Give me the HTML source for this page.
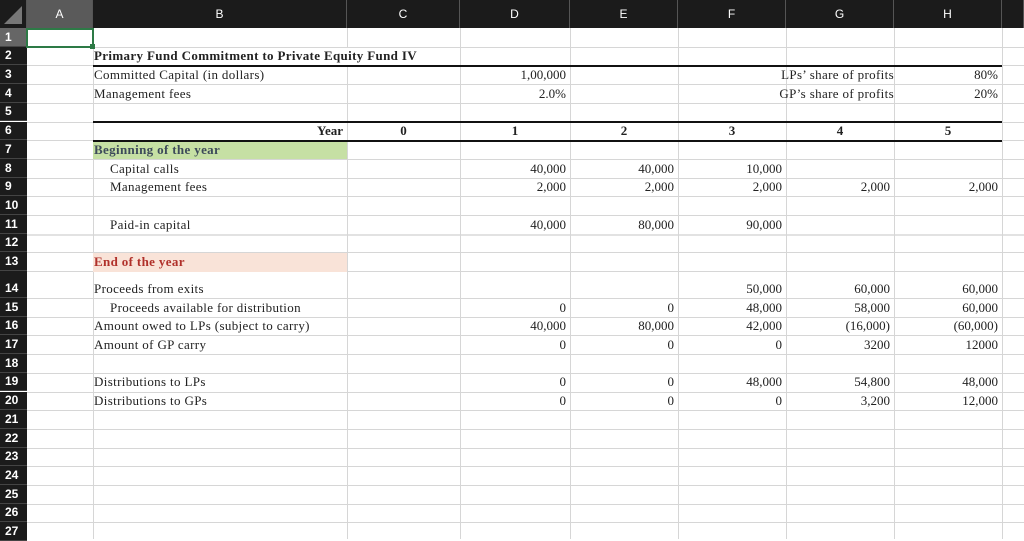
<!DOCTYPE html>
<html><head><meta charset="utf-8"><style>
body{margin:0;width:1024px;height:539px;overflow:hidden;background:#fff;position:relative;font-family:"Liberation Serif",serif;font-size:13px;color:#222}
div{position:absolute;box-sizing:border-box}
.hl{left:27px;width:997px;height:1px;background:#d6d6d6}
.vl{top:28px;height:511px;width:1px;background:#d6d6d6}
.k{left:93px;width:909px;height:1.5px;background:#111}
.c{height:18.7px;white-space:nowrap;padding:0 4px 2px 4px;display:flex;align-items:flex-end;line-height:14px}
.l{padding-left:1px;letter-spacing:0.35px}
.r{justify-content:flex-end}
.m{justify-content:center}
.b{font-weight:bold}
.hd{top:0;height:28px;background:#1b1b1b;color:#fff;font-family:"Liberation Sans",sans-serif;font-size:12px;display:flex;align-items:center;justify-content:center;border-right:1px solid #555}
.rn{left:0;width:27px;height:18.7px;background:#1b1b1b;color:#fff;font-family:"Liberation Sans",sans-serif;font-size:12px;font-weight:bold;padding:0 0 2px 5px;display:flex;align-items:flex-end;border-bottom:1px solid #444}
</style></head><body>
<div class="hd" style="left:0;width:27px"><svg width="27" height="28" style="position:absolute;left:0;top:0"><polygon points="22,6 22,24 4,24" fill="#777"/></svg></div>
<div class="hd" style="left:27px;width:66px;background:#5a5a5a">A</div>
<div class="hd" style="left:93px;width:254px">B</div>
<div class="hd" style="left:347px;width:113px">C</div>
<div class="hd" style="left:460px;width:110px">D</div>
<div class="hd" style="left:570px;width:108px">E</div>
<div class="hd" style="left:678px;width:108px">F</div>
<div class="hd" style="left:786px;width:108px">G</div>
<div class="hd" style="left:894px;width:108px">H</div>
<div class="hd" style="left:1002px;width:22px"></div>
<div class="rn" style="top:28px;background:#666">1</div>
<div class="rn" style="top:46.7px">2</div>
<div class="rn" style="top:65.4px">3</div>
<div class="rn" style="top:84.1px">4</div>
<div class="rn" style="top:102.8px">5</div>
<div class="rn" style="top:121.5px">6</div>
<div class="rn" style="top:140.2px">7</div>
<div class="rn" style="top:158.9px">8</div>
<div class="rn" style="top:177.6px">9</div>
<div class="rn" style="top:196.3px">10</div>
<div class="rn" style="top:215px">11</div>
<div class="rn" style="top:233.7px">12</div>
<div class="rn" style="top:252.4px">13</div>
<div class="rn" style="top:271.1px;height:26.9px">14</div>
<div class="rn" style="top:298px">15</div>
<div class="rn" style="top:316.7px">16</div>
<div class="rn" style="top:335.4px">17</div>
<div class="rn" style="top:354.1px">18</div>
<div class="rn" style="top:372.8px">19</div>
<div class="rn" style="top:391.5px">20</div>
<div class="rn" style="top:410.2px">21</div>
<div class="rn" style="top:428.9px">22</div>
<div class="rn" style="top:447.6px">23</div>
<div class="rn" style="top:466.3px">24</div>
<div class="rn" style="top:485px">25</div>
<div class="rn" style="top:503.7px">26</div>
<div class="rn" style="top:522.4px">27</div>
<div class="hl" style="top:46.7px"></div><div class="hl" style="top:65.4px"></div><div class="hl" style="top:84.1px"></div><div class="hl" style="top:102.8px"></div><div class="hl" style="top:121.5px"></div><div class="hl" style="top:140.2px"></div><div class="hl" style="top:158.9px"></div><div class="hl" style="top:177.6px"></div><div class="hl" style="top:196.3px"></div><div class="hl" style="top:215px"></div><div class="hl" style="top:233.7px;height:2px;background:#e2e2e2"></div><div class="hl" style="top:252.4px"></div><div class="hl" style="top:271.1px"></div><div class="hl" style="top:298px"></div><div class="hl" style="top:316.7px"></div><div class="hl" style="top:335.4px"></div><div class="hl" style="top:354.1px"></div><div class="hl" style="top:372.8px"></div><div class="hl" style="top:391.5px"></div><div class="hl" style="top:410.2px"></div><div class="hl" style="top:428.9px"></div><div class="hl" style="top:447.6px"></div><div class="hl" style="top:466.3px"></div><div class="hl" style="top:485px"></div><div class="hl" style="top:503.7px"></div><div class="hl" style="top:522.4px"></div>
<div class="vl" style="left:93px"></div><div class="vl" style="left:347px"></div><div class="vl" style="left:460px"></div><div class="vl" style="left:570px"></div><div class="vl" style="left:678px"></div><div class="vl" style="left:786px"></div><div class="vl" style="left:894px"></div><div class="vl" style="left:1002px"></div>
<div style="left:94px;top:47.7px;width:335px;height:17px;background:#fff"></div>
<div style="left:93px;top:141px;width:254px;height:18px;background:#c6e0a4"></div>
<div style="left:93px;top:253px;width:254px;height:18.5px;background:#f9e3d8"></div>
<div class="k" style="top:65px"></div><div class="k" style="top:121px"></div><div class="k" style="top:140px"></div>
<div style="left:26px;top:27.5px;width:68px;height:20px;border:2px solid #2d7a46"></div>
<div style="left:90px;top:44px;width:5px;height:5px;background:#2d7a46"></div>
<div class="c b l" style="left:93px;top:46.7px">Primary Fund Commitment to Private Equity Fund IV</div>
<div class="c l" style="left:93px;top:65.4px">Committed Capital (in dollars)</div>
<div class="c r" style="left:460px;width:110px;top:65.4px">1,00,000</div>
<div class="c r l" style="left:686px;width:212px;top:65.4px">LPs’ share of profits</div>
<div class="c r" style="left:894px;width:108px;top:65.4px">80%</div>
<div class="c l" style="left:93px;top:84.1px">Management fees</div>
<div class="c r" style="left:460px;width:110px;top:84.1px">2.0%</div>
<div class="c r l" style="left:686px;width:212px;top:84.1px">GP’s share of profits</div>
<div class="c r" style="left:894px;width:108px;top:84.1px">20%</div>
<div class="c r b" style="left:93px;width:254px;top:121.5px">Year</div>
<div class="c m b" style="left:347px;width:113px;top:121.5px">0</div>
<div class="c m b" style="left:460px;width:110px;top:121.5px">1</div>
<div class="c m b" style="left:570px;width:108px;top:121.5px">2</div>
<div class="c m b" style="left:678px;width:108px;top:121.5px">3</div>
<div class="c m b" style="left:786px;width:108px;top:121.5px">4</div>
<div class="c m b" style="left:894px;width:108px;top:121.5px">5</div>
<div class="c b l" style="left:93px;top:140.2px;color:#3d4a5a">Beginning of the year</div>
<div class="c l" style="left:109px;top:158.9px">Capital calls</div>
<div class="c r" style="left:460px;width:110px;top:158.9px">40,000</div>
<div class="c r" style="left:570px;width:108px;top:158.9px">40,000</div>
<div class="c r" style="left:678px;width:108px;top:158.9px">10,000</div>
<div class="c l" style="left:109px;top:177.6px">Management fees</div>
<div class="c r" style="left:460px;width:110px;top:177.6px">2,000</div>
<div class="c r" style="left:570px;width:108px;top:177.6px">2,000</div>
<div class="c r" style="left:678px;width:108px;top:177.6px">2,000</div>
<div class="c r" style="left:786px;width:108px;top:177.6px">2,000</div>
<div class="c r" style="left:894px;width:108px;top:177.6px">2,000</div>
<div class="c l" style="left:109px;top:215px">Paid-in capital</div>
<div class="c r" style="left:460px;width:110px;top:215px">40,000</div>
<div class="c r" style="left:570px;width:108px;top:215px">80,000</div>
<div class="c r" style="left:678px;width:108px;top:215px">90,000</div>
<div class="c b l" style="left:93px;top:252.4px;color:#b0302a">End of the year</div>
<div class="c l" style="left:93px;top:279.3px">Proceeds from exits</div>
<div class="c r" style="left:678px;width:108px;top:279.3px">50,000</div>
<div class="c r" style="left:786px;width:108px;top:279.3px">60,000</div>
<div class="c r" style="left:894px;width:108px;top:279.3px">60,000</div>
<div class="c l" style="left:109px;top:298px">Proceeds available for distribution</div>
<div class="c r" style="left:460px;width:110px;top:298px">0</div>
<div class="c r" style="left:570px;width:108px;top:298px">0</div>
<div class="c r" style="left:678px;width:108px;top:298px">48,000</div>
<div class="c r" style="left:786px;width:108px;top:298px">58,000</div>
<div class="c r" style="left:894px;width:108px;top:298px">60,000</div>
<div class="c l" style="left:93px;top:316.7px">Amount owed to LPs (subject to carry)</div>
<div class="c r" style="left:460px;width:110px;top:316.7px">40,000</div>
<div class="c r" style="left:570px;width:108px;top:316.7px">80,000</div>
<div class="c r" style="left:678px;width:108px;top:316.7px">42,000</div>
<div class="c r" style="left:786px;width:108px;top:316.7px">(16,000)</div>
<div class="c r" style="left:894px;width:108px;top:316.7px">(60,000)</div>
<div class="c l" style="left:93px;top:335.4px">Amount of GP carry</div>
<div class="c r" style="left:460px;width:110px;top:335.4px">0</div>
<div class="c r" style="left:570px;width:108px;top:335.4px">0</div>
<div class="c r" style="left:678px;width:108px;top:335.4px">0</div>
<div class="c r" style="left:786px;width:108px;top:335.4px">3200</div>
<div class="c r" style="left:894px;width:108px;top:335.4px">12000</div>
<div class="c l" style="left:93px;top:372.8px">Distributions to LPs</div>
<div class="c r" style="left:460px;width:110px;top:372.8px">0</div>
<div class="c r" style="left:570px;width:108px;top:372.8px">0</div>
<div class="c r" style="left:678px;width:108px;top:372.8px">48,000</div>
<div class="c r" style="left:786px;width:108px;top:372.8px">54,800</div>
<div class="c r" style="left:894px;width:108px;top:372.8px">48,000</div>
<div class="c l" style="left:93px;top:391.5px">Distributions to GPs</div>
<div class="c r" style="left:460px;width:110px;top:391.5px">0</div>
<div class="c r" style="left:570px;width:108px;top:391.5px">0</div>
<div class="c r" style="left:678px;width:108px;top:391.5px">0</div>
<div class="c r" style="left:786px;width:108px;top:391.5px">3,200</div>
<div class="c r" style="left:894px;width:108px;top:391.5px">12,000</div>
</body></html>
